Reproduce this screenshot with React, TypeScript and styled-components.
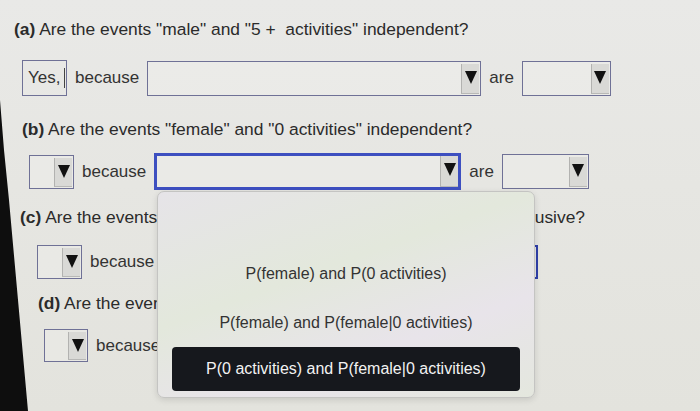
import React from "react";
import styled, { createGlobalStyle } from "styled-components";

const Global = createGlobalStyle`
  html, body { margin: 0; padding: 0; }
  body {
    width: 700px;
    height: 411px;
    overflow: hidden;
    background: #e6e6e3;
    font-family: "Liberation Sans", Arial, sans-serif;
    color: #2f2f2f;
  }
`;

const Page = styled.div`
  position: relative;
  width: 700px;
  height: 411px;
  overflow: hidden;
  background: linear-gradient(180deg, #e9e9e7 0%, #e6e6e2 45%, #e3e3dd 100%);
`;

const Section = styled.section<{ $indent: number; $top: number; $rowIndent: number; $gap: number }>`
  display: flex;
  flex-direction: column;
  gap: ${(p) => p.$gap}px;
  margin-top: ${(p) => p.$top}px;
  padding-left: ${(p) => p.$indent}px;
  & > div { margin-left: ${(p) => p.$rowIndent - p.$indent}px; }
`;

const Title = styled.h2<{ $width?: number }>`
  margin: 0;
  font-size: 17.4px;
  font-weight: 400;
  line-height: 20px;
  white-space: nowrap;
  color: #2b2b2b;
  display: flex;
  justify-content: space-between;
  width: ${(p) => (p.$width ? `${p.$width}px` : "auto")};
  b { font-weight: 700; }
`;

const Row = styled.div`
  display: flex;
  align-items: center;
  gap: 8px;
  font-size: 17px;
  white-space: nowrap;
`;

const Word = styled.span`
  color: #333;
  line-height: 20px;
`;

const Select = styled.div<{ $w: number; $h?: number; $focus?: boolean }>`
  box-sizing: border-box;
  width: ${(p) => p.$w}px;
  height: ${(p) => p.$h ?? 35}px;
  border: ${(p) => (p.$focus ? "3px solid #3d4fc0" : "1.5px solid #6f7196")};
  background: rgba(240, 240, 238, 0.35);
  display: flex;
  justify-content: flex-end;
  align-items: stretch;
  padding: ${(p) => (p.$focus ? "0px 0 0" : "2px 1px 1px")};
`;

const ArrowBtn = styled.div`
  width: 18px;
  background: #d9d9d6;
  border-left: 1px solid #b2b2b0;
  border-bottom: 1px solid #b8b8b6;
  display: flex;
  justify-content: center;
  padding-top: 7px;
  box-sizing: border-box;
`;

const Tri = styled.div`
  width: 0;
  height: 0;
  border-left: 6px solid transparent;
  border-right: 6px solid transparent;
  border-top: 13px solid #111;
`;

const YesBox = styled.div`
  box-sizing: border-box;
  width: 45px;
  height: 36px;
  border: 1.5px solid #6f7196;
  display: flex;
  align-items: center;
  justify-content: flex-end;
  gap: 3px;
  padding-right: 1px;
  font-size: 17px;
  color: #333;
  &::after {
    content: "";
    width: 1.5px;
    height: 20px;
    background: #444;
  }
`;

const EdgeSelect = styled.div`
  box-sizing: border-box;
  width: 376px;
  height: 34px;
  border: 2px solid #2f3fa8;
`;

const Menu = styled.div`
  position: absolute;
  left: 157px;
  top: 191px;
  width: 378px;
  height: 207px;
  box-sizing: border-box;
  border: 1px solid #c4c4c2;
  border-radius: 7px;
  background: linear-gradient(160deg, #e6e4e8 0%, #e3e8dc 40%, #e8e4ea 70%, #e4e7de 100%);
  box-shadow: 0 2px 6px rgba(0, 0, 0, 0.12);
  display: flex;
  flex-direction: column;
  padding: 0 14px 6px 14px;
`;

const Spacer = styled.div`
  flex: 1;
`;

const Option = styled.div<{ $selected?: boolean }>`
  height: ${(p) => (p.$selected ? 44 : 49)}px;
  border-radius: 4px;
  display: flex;
  align-items: center;
  justify-content: center;
  font-size: 16px;
  white-space: nowrap;
  color: ${(p) => (p.$selected ? "#f2f2f2" : "#333")};
  background: ${(p) => (p.$selected ? "#16181d" : "transparent")};
`;

const Bezel = styled.div`
  position: absolute;
  left: 0;
  top: 0;
  width: 30px;
  height: 411px;
  background: #0e0e0e;
  clip-path: polygon(0 100px, 4px 150px, 9px 200px, 28px 411px, 0 411px);
`;

const Select2 = ({ w, h, focus }: { w: number; h?: number; focus?: boolean }) => (
  <Select $w={w} $h={h} $focus={focus}>
    <ArrowBtn>
      <Tri />
    </ArrowBtn>
  </Select>
);

export default function App() {
  return (
    <Page>
      <Global />
      <Section $indent={14} $rowIndent={22} $top={19} $gap={21}>
        <Title>
          <span>
            <b>(a)</b> Are the events "male" and "5 + &nbsp;activities" independent?
          </span>
        </Title>
        <Row>
          <YesBox>Yes,</YesBox>
          <Word>because</Word>
          <Select2 w={334} />
          <Word>are</Word>
          <Select2 w={89} />
        </Row>
      </Section>
      <Section $indent={22} $rowIndent={29} $top={23} $gap={14}>
        <Title>
          <span>
            <b>(b)</b> Are the events "female" and "0 activities" independent?
          </span>
        </Title>
        <Row>
          <Select2 w={45} h={34} />
          <Word>because</Word>
          <Select2 w={307} h={37} focus />
          <Word>are</Word>
          <Select2 w={87} h={35} />
        </Row>
      </Section>
      <Section $indent={20} $rowIndent={37} $top={17} $gap={18}>
        <Title $width={565}>
          <span>
            <b>(c)</b> Are the events "female" and "5 + &nbsp;activities"
          </span>
          <span>mutually exclusive?</span>
        </Title>
        <Row>
          <Select2 w={45} h={34} />
          <Word>because</Word>
          <EdgeSelect />
        </Row>
      </Section>
      <Section $indent={38} $rowIndent={44} $top={14} $gap={16}>
        <Title>
          <span>
            <b>(d)</b> Are the events "male" and "0 activities" independent?
          </span>
        </Title>
        <Row>
          <Select2 w={44} h={33} />
          <Word>because</Word>
        </Row>
      </Section>
      <Menu>
        <Spacer />
        <Option>P(female) and P(0 activities)</Option>
        <Option>P(female) and P(female|0 activities)</Option>
        <Option $selected>P(0 activities) and P(female|0 activities)</Option>
      </Menu>
      <Bezel />
    </Page>
  );
}
